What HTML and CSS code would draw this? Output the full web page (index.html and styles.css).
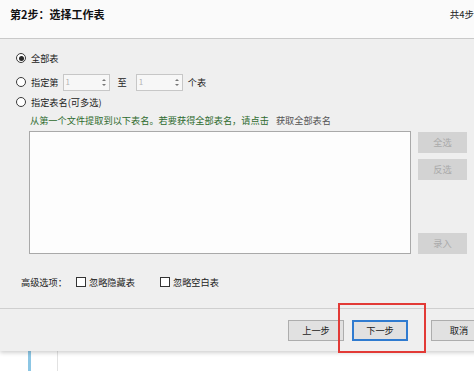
FILE: index.html
```html
<!DOCTYPE html>
<html>
<head>
<meta charset="utf-8">
<link rel="stylesheet" href="styles.css">
</head>
<body>
<div class="page">
  <div class="dialog">
    <div class="header">
      <span class="title">第2步：选择工作表</span>
      <span class="steps">共4步</span>
    </div>
    <div class="content">
      <div class="row r1"><span class="radio checked"></span><span>全部表</span></div>
      <div class="row r2">
        <span class="radio"></span><span>指定第</span>
        <span class="spin"><span class="val">1</span><span class="arrows"><i class="up"></i><i class="down"></i></span></span>
        <span class="to">至</span>
        <span class="spin"><span class="val">1</span><span class="arrows"><i class="up"></i><i class="down"></i></span></span>
        <span class="unit">个表</span>
      </div>
      <div class="row r3"><span class="radio"></span><span>指定表名(可多选)</span></div>
      <div class="hint"><span class="green">从第一个文件提取到以下表名。若要获得全部表名，请点击</span><span class="link">获取全部表名</span></div>
      <div class="listarea">
        <div class="listbox"></div>
        <div class="sidebtns">
          <div class="sbtn">全选</div>
          <div class="sbtn">反选</div>
          <div class="sbtn push">录入</div>
        </div>
      </div>
      <div class="adv">
        <span class="advlabel">高级选项：</span>
        <span class="check"></span><span class="cklabel">忽略隐藏表</span>
        <span class="check c2"></span><span class="cklabel">忽略空白表</span>
      </div>
    </div>
    <div class="footer">
      <div class="btn">上一步</div>
      <div class="btn primary">下一步</div>
      <div class="btn cancel">取消</div>
    </div>
  </div>
  <div class="desk">
    <span class="blueline"></span>
    <span class="grayline"></span>
  </div>
  <div class="redbox"></div>
</div>
</body>
</html>
```
FILE: styles.css
```css
* { box-sizing: border-box; }
html, body { margin: 0; padding: 0; }
body {
  width: 474px;
  height: 371px;
  overflow: hidden;
  background: #ffffff;
  font-family: "Noto Sans CJK SC", "Noto Sans", sans-serif;
  color: #222;
}
.page { position: relative; width: 474px; height: 371px; overflow: hidden; }
.dialog {
  width: 495px;
  background: #efefef;
  box-shadow: 0 2px 4px rgba(0,0,0,0.18);
  position: relative;
  z-index: 1;
}
.header {
  height: 39px;
  background: #fafafa;
  border-bottom: 1px solid #c9c9c9;
  display: flex;
  align-items: flex-start;
  padding: 8px 16px 0 10px;
}
.title { font-size: 11px; font-weight: bold; line-height: 13px; color: #111; }
.steps { margin-left: auto; margin-right: 5px; font-size: 9.5px; line-height: 13px; color: #222; }
.content {
  height: 270px;
  padding: 11px 0 0 16px;
  font-size: 9.2px;
  border-bottom: 1px solid #cfcfcf;
}
.row { display: flex; align-items: center; height: 16px; line-height: 16px; color: #222; }
.radio {
  width: 10px; height: 10px;
  border: 1px solid #3a3a3a;
  border-radius: 50%;
  background: #fff;
  margin-right: 5px;
  display: flex; align-items: center; justify-content: center;
}
.radio.checked::after {
  content: "";
  width: 5px; height: 5px; border-radius: 50%; background: #2a2a2a;
}
.r2 { margin-top: 7px; height: 18px; }
.r3 { margin-top: 3px; }
.spin {
  width: 47px; height: 17px;
  margin-left: 4px;
  border: 1px solid #c7c7c7;
  background: #f7f7f7;
  display: flex; align-items: center; justify-content: space-between;
  padding: 0 2px 0 2px;
}
.spin .val { color: #b5b5b5; font-size: 8px; line-height: 12px; }
.arrows { display: flex; flex-direction: column; gap: 3px; align-items: center; width: 6px; }
.arrows i { display: block; width: 0; height: 0; border-left: 2px solid transparent; border-right: 2px solid transparent; }
.arrows .up { border-bottom: 2px solid #777; }
.arrows .down { border-top: 2px solid #777; }
.to { margin: 0 5px 0 8px; }
.unit { margin-left: 5px; }
.hint {
  margin-top: 2px;
  padding-left: 14px;
  height: 16px; line-height: 16px;
  white-space: nowrap;
}
.green { color: #2e6b2e; }
.link { color: #555; margin-left: 7px; }
.listarea { display: flex; margin-top: 3px; padding-left: 13px; height: 123px; }
.listbox {
  width: 382px; height: 123px;
  background: #fdfdfd;
  border: 1px solid #a9a9a9;
}
.sidebtns { display: flex; flex-direction: column; margin-left: 7px; width: 49px; }
.sbtn {
  height: 21px;
  background: #d3d3d3;
  color: #aaaaaa;
  text-align: center;
  line-height: 21px;
  font-size: 9.2px;
  margin-top: 1px;
}
.sbtn + .sbtn { margin-top: 6px; }
.sbtn.push { margin-top: auto; }
.adv { display: flex; align-items: center; height: 16px; line-height: 16px; margin-top: 20px; padding-left: 5px; color: #222; }
.advlabel { width: 55px; }
.check { width: 10px; height: 10px; border: 1px solid #333; background: #fff; margin-right: 3px; }
.cklabel { width: 71px; }
.footer {
  height: 42px;
  display: flex;
  justify-content: flex-end;
  align-items: flex-start;
  padding: 11px 8px 0 0;
}
.btn {
  width: 56px; height: 21px;
  background: #e1e1e1;
  border: 1px solid #adadad;
  font-size: 9.2px;
  text-align: center;
  line-height: 19px;
  color: #222;
}
.btn.primary { margin-left: 8px; border: 2px solid #2f7bd0; line-height: 17px; }
.btn.cancel { margin-left: 23px; }
.desk { display: flex; height: 30px; padding-left: 28px; }
.blueline { width: 3px; height: 100%; background: #8cc6e4; }
.grayline { width: 1px; height: 100%; background: #e2e2e2; margin-left: 26px; }
.redbox {
  position: absolute;
  left: 338px; top: 303px;
  width: 88px; height: 50px;
  border: 2px solid #e23a36;
  z-index: 2;
}
```
